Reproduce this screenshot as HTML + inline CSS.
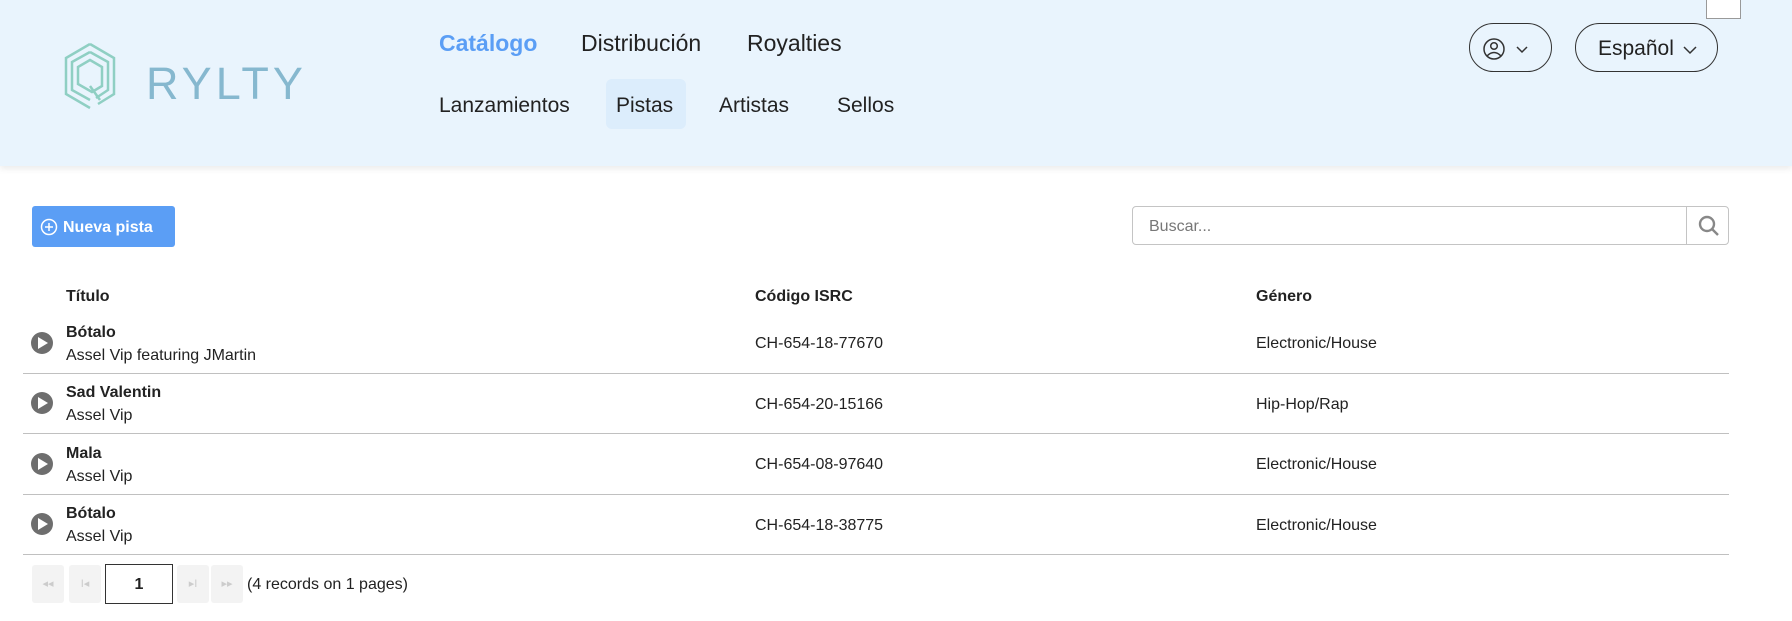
<!DOCTYPE html>
<html><head><meta charset="utf-8"><style>
*{box-sizing:border-box;margin:0;padding:0}
body{width:1792px;height:621px;background:#fff;font-family:"Liberation Sans",sans-serif;color:#222;position:relative;overflow:hidden}
.hdr{position:absolute;left:0;top:0;width:1792px;height:166px;background:#e9f4fd;box-shadow:0 3px 6px rgba(0,0,0,.08)}
.a{position:absolute;white-space:nowrap}
.nav1{top:30px;font-size:23px;color:#222}
.nav2{top:94px;font-size:21px;color:#222}
.pill{position:absolute;border:1.3px solid #333;border-radius:26px;height:49px;top:23px}
.th{top:288px;font-size:16px;font-weight:bold}
.t{font-size:16px;font-weight:bold}
.s{font-size:16px}
.line{position:absolute;left:23px;width:1706px;height:1px;background:#c0c0c0}
.pg{position:absolute;top:565px;width:32px;height:38px;background:#f3f3f3;border-radius:3px;color:#ccc;font-size:11px;text-align:center;line-height:38px}
</style></head><body>
<div class="hdr"></div>
<svg class="a" style="left:63px;top:42px" width="54" height="68" viewBox="0 0 54 68" fill="none" stroke="#8fcfc3" stroke-width="2.5">
<path d="M27 2 L51 16 L51 52 L35 62"/><path d="M27 2 L3 16 L3 52 L27 66"/>
<path d="M27 10 L45 20 L45 48 L33 56"/><path d="M27 10 L9 20 L9 48 L27 58"/>
<path d="M27 18 L39 25 L39 44 L29 50 L15 42 L15 25 Z"/><path d="M27 44 L37 58"/>
</svg>
<div class="a" style="left:146px;top:58px;font-size:45px;letter-spacing:4px;color:#86b8cf">RYLTY</div>
<div class="a nav1" style="left:439px;color:#5b9ef5;font-weight:bold">Catálogo</div>
<div class="a nav1" style="left:581px">Distribución</div>
<div class="a nav1" style="left:747px">Royalties</div>
<div class="a" style="left:606px;top:79px;width:80px;height:50px;background:#dcedfc;border-radius:6px"></div>
<div class="a nav2" style="left:439px">Lanzamientos</div>
<div class="a nav2" style="left:616px">Pistas</div>
<div class="a nav2" style="left:719px">Artistas</div>
<div class="a nav2" style="left:837px">Sellos</div>
<div class="pill" style="left:1469px;width:83px"></div>
<svg class="a" style="left:1483px;top:37px" width="50" height="24" viewBox="0 0 50 24" fill="none" stroke="#333" stroke-width="1.5">
<circle cx="11" cy="12" r="10"/><circle cx="11" cy="9" r="3.3"/><path d="M4 19 Q11 12 18 19"/><path d="M34 10 L39 15 L44 10"/></svg>
<div class="pill" style="left:1575px;width:143px"></div>
<div class="a" style="left:1598px;top:37px;font-size:21px;color:#222">Español</div>
<svg class="a" style="left:1682px;top:44px" width="16" height="12" fill="none" stroke="#333" stroke-width="1.5"><path d="M2 3 L8 9 L14 3"/></svg>
<div class="a" style="left:1706px;top:-1px;width:35px;height:20px;background:#fff;border:1px solid #999"></div>
<div class="a" style="left:32px;top:206px;width:143px;height:41px;background:#5b9ef5;border-radius:3px;color:#fff;font-weight:bold;font-size:16px;line-height:43px;padding-left:31px">Nueva pista</div>
<svg class="a" style="left:40px;top:218px" width="18" height="18" fill="none" stroke="#fff" stroke-width="1.5"><circle cx="9" cy="9" r="7.5"/><path d="M9 5v8M5 9h8"/></svg>
<div class="a" style="left:1132px;top:206px;width:597px;height:39px;border:1px solid #c4c4c4;border-radius:4px"></div>
<div class="a" style="left:1686px;top:206px;width:1px;height:39px;background:#c4c4c4"></div>
<div class="a" style="left:1149px;top:218px;font-size:16px;color:#777">Buscar...</div>
<svg class="a" style="left:1697px;top:214px" width="24" height="24" fill="none" stroke="#888" stroke-width="2.4"><circle cx="10" cy="10" r="7"/><path d="M15 15 L21 21"/></svg>
<div class="a th" style="left:66px">Título</div>
<div class="a th" style="left:755px">Código ISRC</div>
<div class="a th" style="left:1256px">Género</div>
<div class="line" style="top:373px"></div><div class="line" style="top:433px"></div><div class="line" style="top:494px"></div><div class="line" style="top:554px"></div>
<div class="a t" style="left:66px;top:324px">Bótalo</div><div class="a s" style="left:66px;top:347px">Assel Vip featuring JMartin</div>
<div class="a s" style="left:755px;top:335px">CH-654-18-77670</div><div class="a s" style="left:1256px;top:335px">Electronic/House</div>
<div class="a t" style="left:66px;top:384px">Sad Valentin</div><div class="a s" style="left:66px;top:407px">Assel Vip</div>
<div class="a s" style="left:755px;top:396px">CH-654-20-15166</div><div class="a s" style="left:1256px;top:396px">Hip-Hop/Rap</div>
<div class="a t" style="left:66px;top:445px">Mala</div><div class="a s" style="left:66px;top:468px">Assel Vip</div>
<div class="a s" style="left:755px;top:456px">CH-654-08-97640</div><div class="a s" style="left:1256px;top:456px">Electronic/House</div>
<div class="a t" style="left:66px;top:505px">Bótalo</div><div class="a s" style="left:66px;top:528px">Assel Vip</div>
<div class="a s" style="left:755px;top:517px">CH-654-18-38775</div><div class="a s" style="left:1256px;top:517px">Electronic/House</div>
<svg class="a" style="left:0;top:0" width="70" height="560">
<g fill="#6e6e6e"><circle cx="42" cy="343" r="11"/><circle cx="42" cy="403" r="11"/><circle cx="42" cy="464" r="11"/><circle cx="42" cy="524" r="11"/></g>
<g fill="#fff"><path d="M38 337 L48 343 L38 349Z"/><path d="M38 397 L48 403 L38 409Z"/><path d="M38 458 L48 464 L38 470Z"/><path d="M38 518 L48 524 L38 530Z"/></g></svg>
<div class="pg" style="left:32px">◂◂</div><div class="pg" style="left:69px">I◂</div>
<div class="a" style="left:105px;top:564px;width:68px;height:40px;border:1px solid #333;text-align:center;line-height:40px;font-size:16px;font-weight:bold">1</div>
<div class="pg" style="left:177px">▸I</div><div class="pg" style="left:211px">▸▸</div>
<div class="a" style="left:247px;top:576px;font-size:16px">(4 records on 1 pages)</div>
</body></html>
